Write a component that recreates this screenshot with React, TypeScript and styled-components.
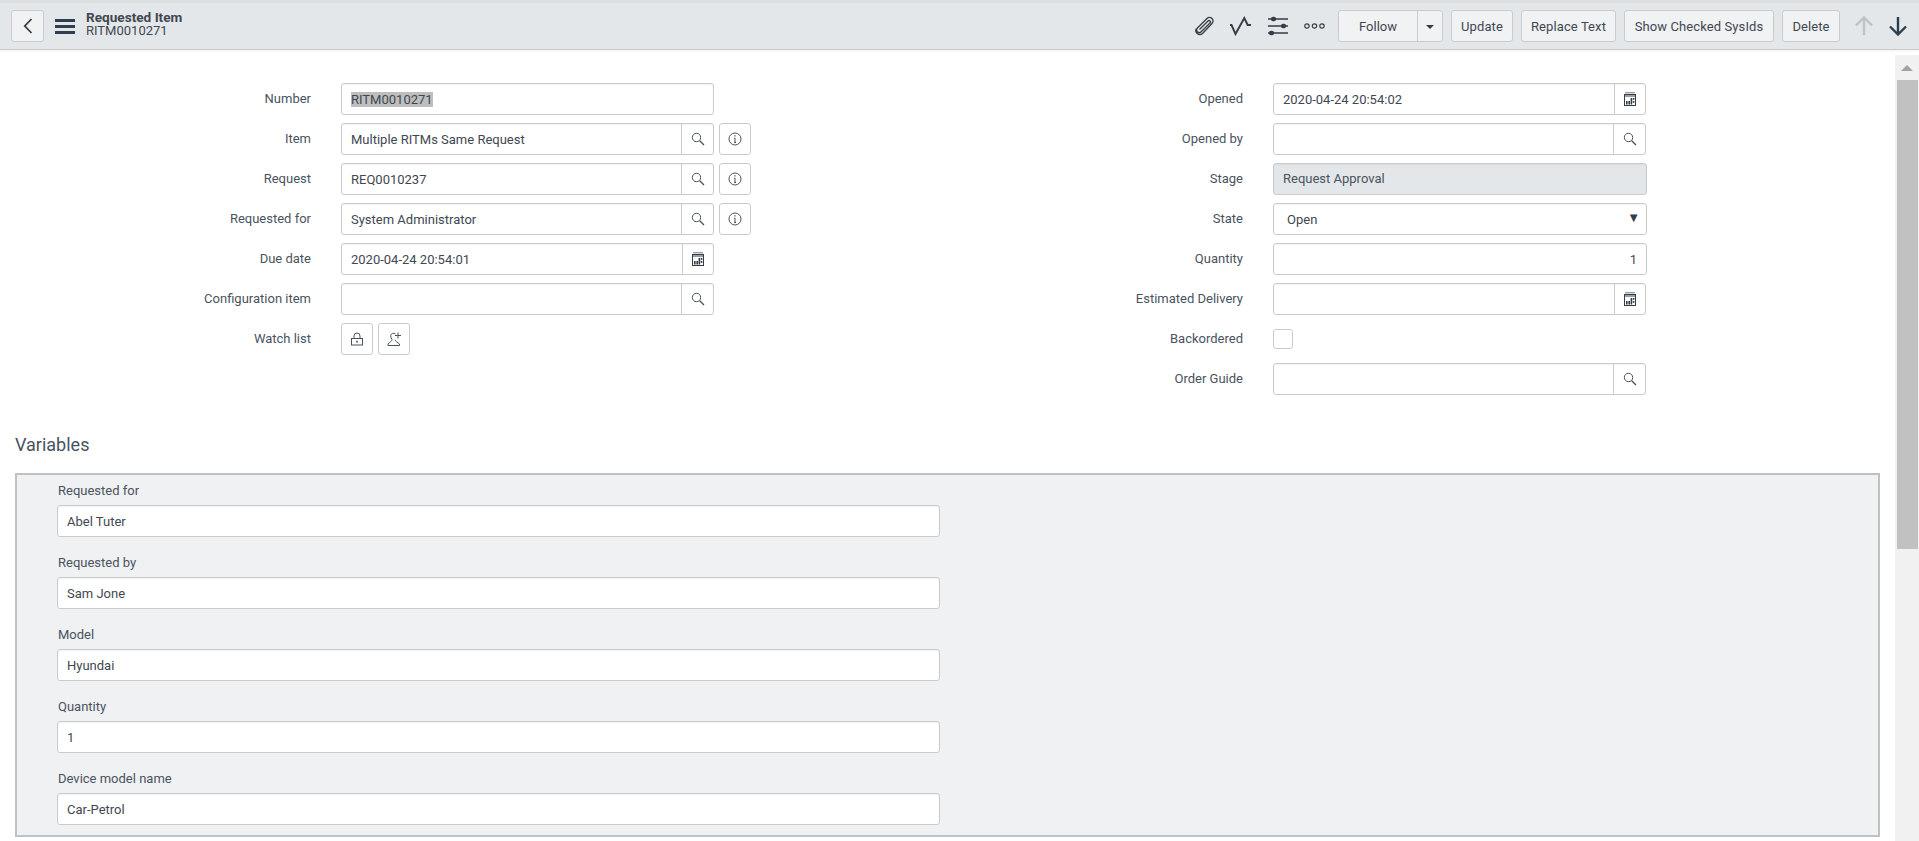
import React from 'react';
import styled, { createGlobalStyle } from 'styled-components';

const GlobalStyle = createGlobalStyle`
    html, body {
        margin:0;
        padding:0;
        height:100%;
        overflow:hidden;
        background:#fff;
    }
    body {
        font-family:Roboto, "Liberation Sans", Arial, sans-serif;
        color:#3f4751;
    }
`

const Page = styled.div`
    display:flex;
    flex-direction:column;
    width:1919px;
    height:841px;
    overflow:hidden;
`

const Header = styled.header`
    display:flex;
    align-items:center;
    flex:none;
    height:50px;
    box-sizing:border-box;
    padding:0 12px 0 11px;
    background:#e4e7e9;
    border-top:3px solid #dcdee0;
    border-bottom:1px solid #c9cccf;
    box-shadow:0 1px 2px rgba(0,0,0,.06);
`

const IconButton = styled.button<{ $w?: number }>`
    display:flex;
    align-items:center;
    justify-content:center;
    flex:none;
    width:${({ $w }) => $w || 32}px;
    height:32px;
    box-sizing:border-box;
    padding:0;
    background:#fff;
    border:1px solid #c9cccf;
    border-radius:3px;
    color:#343d47;
`

const BackButton = styled(IconButton)`
    background:#f1f2f4;
    margin-right:11px;
`

const Hamburger = styled.div`
    display:flex;
    flex-direction:column;
    gap:3px;
    width:20px;
    margin-right:11px;
    span {
        display:block;
        height:3px;
        background:#2e3d4f;
    }
`

const TitleBlock = styled.div`
    flex:1;
    font-size:13px;
    line-height:14px;
    margin-top:-4px;
    .title {
        font-size:13.6px;
        font-weight:700;
    }
`

const Tools = styled.div`
    display:flex;
    align-items:center;
    gap:16px;
    margin-right:13px;
`

const ToolIcon = styled.span`
    display:flex;
    align-items:center;
    justify-content:center;
    flex:none;
    width:21px;
    height:24px;
    color:#343d47;
`

const ActionButton = styled.button<{ $w: number }>`
    flex:none;
    width:${({ $w }) => $w}px;
    height:32px;
    margin-left:8px;
    box-sizing:border-box;
    padding:0;
    background:#f1f2f4;
    border:1px solid #c9cccf;
    border-radius:3px;
    font:inherit;
    font-size:13px;
    letter-spacing:.1px;
    color:#3f4751;
`

const FollowGroup = styled.div`
    display:flex;
    flex:none;
    height:32px;
    width:105px;
    box-sizing:border-box;
    background:#f1f2f4;
    border:1px solid #c9cccf;
    border-radius:3px;
    font-size:13px;
    .label {
        display:flex;
        align-items:center;
        justify-content:center;
        flex:1;
        border-right:1px solid #c9cccf;
    }
    .caret {
        display:flex;
        align-items:center;
        justify-content:center;
        width:24px;
    }
    .caret::after {
        content:'';
        border-left:4px solid transparent;
        border-right:4px solid transparent;
        border-top:4px solid #343d47;
        margin-top:2px;
    }
`

const NavArrow = styled.span<{ $dim?: boolean }>`
    display:flex;
    flex:none;
    margin-left:${({ $dim }) => ($dim ? 15 : 16)}px;
    color:${({ $dim }) => ($dim ? '#bcc2c6' : '#293e51')};
`

const Main = styled.div`
    display:flex;
    flex:1;
    min-height:0;
`

const Content = styled.main`
    flex:1;
    min-width:0;
`

const Scrollbar = styled.aside`
    display:flex;
    flex-direction:column;
    flex:none;
    width:24px;
    margin-top:5px;
    background:#f1f1f1;
    .arrow {
        display:flex;
        align-items:center;
        justify-content:center;
        height:25px;
    }
    .arrow::after {
        content:'';
        border-left:6px solid transparent;
        border-right:6px solid transparent;
        border-bottom:6px solid #a3a3a3;
    }
    .thumb {
        height:469px;
        margin-left:2px;
        margin-right:1px;
        background:#c1c1c1;
    }
`

const FormColumns = styled.section`
    display:grid;
    grid-template-columns:932px 1fr;
    padding-top:33px;
`

const FormColumn = styled.div`
    display:flex;
    flex-direction:column;
    gap:8px;
`

const FormRow = styled.div`
    display:grid;
    grid-template-columns:311px 1fr;
    column-gap:30px;
    align-items:center;
    height:32px;
`

const Label = styled.div`
    margin-top:-2px;
    font-size:13px;
    text-align:right;
    color:#4a535e;
`

const FieldLine = styled.div`
    display:flex;
`

const Group = styled.div<{ $w?: number }>`
    display:flex;
    flex:none;
    width:${({ $w }) => $w || 373}px;
    height:32px;
    box-sizing:border-box;
    background:#fff;
    border:1px solid #c9cccf;
    border-radius:3px;
    box-shadow:inset 0 1px 1px rgba(0,0,0,.05);
    font-size:13px;
`

const Value = styled.div<{ $align?: string }>`
    flex:1;
    min-width:0;
    padding:0 9px;
    line-height:31px;
    text-align:${({ $align }) => $align || 'left'};
    white-space:nowrap;
    color:#3f4751;
    .selected {
        background:#bebebe;
    }
`

const Addon = styled.div<{ $w?: number }>`
    display:flex;
    align-items:center;
    justify-content:center;
    flex:none;
    width:${({ $w }) => $w || 31}px;
    border-left:1px solid #c9cccf;
    color:#4a535e;
`

const ReadOnly = styled(Group)`
    background:#e4e7e9;
    ${Value} {
        line-height:30px;
        color:#4a535e;
    }
`

const SelectBox = styled(Group)`
    position:relative;
    ${Value} {
        padding-left:13px;
    }
    &::after {
        content:'▼';
        position:absolute;
        right:6px;
        top:6px;
        font-size:13px;
        line-height:16px;
        color:#2e3d4f;
    }
`

const InfoButton = styled(IconButton)`
    margin-left:5px;
    color:#4a535e;
`

const WatchButton = styled(IconButton)`
    margin-right:5px;
    color:#4a535e;
`

const Checkbox = styled.div`
    width:20px;
    height:20px;
    box-sizing:border-box;
    background:#fff;
    border:1px solid #c9cccf;
    border-radius:3px;
`

const SectionTitle = styled.h2`
    box-sizing:border-box;
    margin:0;
    padding:38px 0 0 15px;
    height:78px;
    font-size:18px;
    font-weight:400;
    line-height:24px;
    color:#4a535e;
`

const VariablesBox = styled.div`
    box-sizing:border-box;
    width:1865px;
    height:364px;
    margin-left:15px;
    padding:4px 0 0 40px;
    background:#f0f1f3;
    border:2px solid #bcc2c6;
`

const Variable = styled.div`
    width:883px;
    height:72px;
    .name {
        height:26px;
        font-size:13px;
        line-height:24px;
        padding-left:1px;
        color:#4a535e;
    }
    ${Group} {
        width:100%;
    }
`

const Search = () => (
    <svg width="14" height="14" viewBox="0 0 14 14" fill="none" stroke="currentColor" strokeWidth="1">
        <circle cx="5.5" cy="5.5" r="4.2" />
        <path d="M8.7 8.7 L13 13" strokeWidth="1.3" />
    </svg>
)

const Info = () => (
    <svg width="14" height="14" viewBox="0 0 14 14" fill="none" stroke="currentColor">
        <circle cx="7" cy="7" r="6" />
        <path d="M7 6 V10.5 M6 6.2 H7 M6 10.5 H8" />
        <path d="M7 3.2 V4.4" strokeWidth="1.3" />
    </svg>
)

const Calendar = () => (
    <svg width="14" height="14" viewBox="0 0 14 14" fill="none">
        <path d="M3 0 V2 M5 0 V2 M7 0 V2 M9 0 V2 M11 0 V2" stroke="#343d47" strokeDasharray="1 0.6" />
        <rect x="1.5" y="2.5" width="11" height="11" fill="#fff" stroke="#343d47" />
        <path d="M1.5 4 H12.5" stroke="#343d47" />
        <rect x="3" y="9" width="1.6" height="3.5" fill="#343d47" />
        <rect x="5.4" y="9" width="1.6" height="3.5" fill="#343d47" />
        <rect x="7.6" y="6" width="1.6" height="6.5" fill="#343d47" />
        <rect x="9.8" y="6" width="1.6" height="1.8" fill="#343d47" />
        <rect x="9.8" y="9" width="1.6" height="1.8" fill="#343d47" />
    </svg>
)

const Lock = () => (
    <svg width="14" height="14" viewBox="0 0 14 14" fill="none" stroke="currentColor">
        <path d="M4 6.5 V4 a3 3 0 0 1 6 0 V6.5" />
        <rect x="1.5" y="6.5" width="11" height="6.5" />
        <path d="M7 8.7 V10.6" strokeWidth="1.6" />
    </svg>
)

const AddUser = () => (
    <svg width="15" height="15" viewBox="0 0 15 15" fill="none" stroke="currentColor">
        <path d="M8.5 2 A3 3 0 0 0 3.6 3.8 C3.6 5.5 4.6 6.4 5 7.6 C5 9 3 10 1 12 V13.5 H12.5 V12 C10.6 10.2 8.3 9.4 7.9 7.8" />
        <path d="M11 0.5 V6.5 M8 3.5 H14" />
    </svg>
)

const Clip = () => (
    <svg width="20" height="20" viewBox="0 0 20 20" fill="none" stroke="currentColor" strokeWidth="1.3">
        <path d="M5.5 13.5 L14 5 A1.3 1.3 0 0 1 16 7 L7.2 15.8 A2.6 2.6 0 0 1 3.4 12 L13 2.5 A3.3 3.3 0 0 1 18 7.5 L8.5 17.5 A4 4 0 0 1 2.2 12.8" />
    </svg>
)

const Pulse = () => (
    <svg width="21" height="20" viewBox="0 0 21 20" fill="none" stroke="currentColor" strokeWidth="1.9">
        <path d="M0 9 H1.5 L5.5 18 L14.3 2 L17.7 9 H21" />
    </svg>
)

const Sliders = () => (
    <svg width="20" height="20" viewBox="0 0 20 20" fill="none">
        <path d="M0 3 H20 M0 10 H20 M0 17 H20" stroke="currentColor" strokeWidth="1.5" />
        <rect x="3" y="0.8" width="5" height="4.4" rx="2" fill="currentColor" />
        <rect x="13" y="7.8" width="5" height="4.4" rx="2" fill="currentColor" />
        <rect x="1" y="14.8" width="5" height="4.4" rx="2" fill="currentColor" />
    </svg>
)

const Dots = () => (
    <svg width="21" height="6" viewBox="0 0 21 6" fill="none" stroke="currentColor" strokeWidth="1.2">
        <circle cx="3" cy="3" r="2.2" />
        <circle cx="10.5" cy="3" r="2.2" />
        <circle cx="18" cy="3" r="2.2" />
    </svg>
)

const Arrow = ({ down }: { down?: boolean }) => (
    <svg width="18" height="20" viewBox="0 0 18 20" fill="none" stroke="currentColor" strokeWidth="2.4">
        {down
            ? <path d="M9 1 V18.5 M1 10.5 L9 18.5 L17 10.5" />
            : <path d="M9 19 V1.5 M1 9.5 L9 1.5 L17 9.5" />}
    </svg>
)

const SearchField = ({ value, info }: { value?: string; info?: boolean }) => (
    <FieldLine>
        <Group>
            <Value>{value}</Value>
            <Addon><Search /></Addon>
        </Group>
        {info && <InfoButton><Info /></InfoButton>}
    </FieldLine>
)

const DateField = ({ value }: { value?: string }) => (
    <Group>
        <Value>{value}</Value>
        <Addon $w={30}><Calendar /></Addon>
    </Group>
)

const variables = [
    ['Requested for', 'Abel Tuter'],
    ['Requested by', 'Sam Jone'],
    ['Model', 'Hyundai'],
    ['Quantity', '1'],
    ['Device model name', 'Car-Petrol'],
]

const App = () => {
    return (
        <Page>
            <GlobalStyle />
            <Header>
                <BackButton $w={33}>
                    <svg width="10" height="16" viewBox="0 0 10 16" fill="none" stroke="currentColor" strokeWidth="1.8">
                        <path d="M8.5 1 L1.8 8 L8.5 15" />
                    </svg>
                </BackButton>
                <Hamburger><span /><span /><span /></Hamburger>
                <TitleBlock>
                    <div className="title">Requested Item</div>
                    <div>RITM0010271</div>
                </TitleBlock>
                <Tools>
                    <ToolIcon><Clip /></ToolIcon>
                    <ToolIcon><Pulse /></ToolIcon>
                    <ToolIcon><Sliders /></ToolIcon>
                    <ToolIcon><Dots /></ToolIcon>
                </Tools>
                <FollowGroup>
                    <span className="label">Follow</span>
                    <span className="caret" />
                </FollowGroup>
                <ActionButton $w={62}>Update</ActionButton>
                <ActionButton $w={95}>Replace Text</ActionButton>
                <ActionButton $w={150}>Show Checked SysIds</ActionButton>
                <ActionButton $w={58}>Delete</ActionButton>
                <NavArrow $dim><Arrow /></NavArrow>
                <NavArrow><Arrow down /></NavArrow>
            </Header>
            <Main>
                <Content>
                    <FormColumns>
                        <FormColumn>
                            <FormRow>
                                <Label>Number</Label>
                                <Group>
                                    <Value><span className="selected">RITM0010271</span></Value>
                                </Group>
                            </FormRow>
                            <FormRow>
                                <Label>Item</Label>
                                <SearchField value="Multiple RITMs Same Request" info />
                            </FormRow>
                            <FormRow>
                                <Label>Request</Label>
                                <SearchField value="REQ0010237" info />
                            </FormRow>
                            <FormRow>
                                <Label>Requested for</Label>
                                <SearchField value="System Administrator" info />
                            </FormRow>
                            <FormRow>
                                <Label>Due date</Label>
                                <DateField value="2020-04-24 20:54:01" />
                            </FormRow>
                            <FormRow>
                                <Label>Configuration item</Label>
                                <SearchField />
                            </FormRow>
                            <FormRow>
                                <Label>Watch list</Label>
                                <FieldLine>
                                    <WatchButton><Lock /></WatchButton>
                                    <WatchButton><AddUser /></WatchButton>
                                </FieldLine>
                            </FormRow>
                        </FormColumn>
                        <FormColumn>
                            <FormRow>
                                <Label>Opened</Label>
                                <DateField value="2020-04-24 20:54:02" />
                            </FormRow>
                            <FormRow>
                                <Label>Opened by</Label>
                                <SearchField />
                            </FormRow>
                            <FormRow>
                                <Label>Stage</Label>
                                <ReadOnly $w={374}><Value>Request Approval</Value></ReadOnly>
                            </FormRow>
                            <FormRow>
                                <Label>State</Label>
                                <SelectBox $w={374}><Value>Open</Value></SelectBox>
                            </FormRow>
                            <FormRow>
                                <Label>Quantity</Label>
                                <Group $w={374}><Value $align="right">1</Value></Group>
                            </FormRow>
                            <FormRow>
                                <Label>Estimated Delivery</Label>
                                <DateField />
                            </FormRow>
                            <FormRow>
                                <Label>Backordered</Label>
                                <Checkbox />
                            </FormRow>
                            <FormRow>
                                <Label>Order Guide</Label>
                                <SearchField />
                            </FormRow>
                        </FormColumn>
                    </FormColumns>
                    <SectionTitle>Variables</SectionTitle>
                    <VariablesBox>
                        {variables.map(([name, value]) => (
                            <Variable key={name}>
                                <div className="name">{name}</div>
                                <Group><Value>{value}</Value></Group>
                            </Variable>
                        ))}
                    </VariablesBox>
                </Content>
                <Scrollbar>
                    <div className="arrow" />
                    <div className="thumb" />
                </Scrollbar>
            </Main>
        </Page>
    )
}

export default App;
